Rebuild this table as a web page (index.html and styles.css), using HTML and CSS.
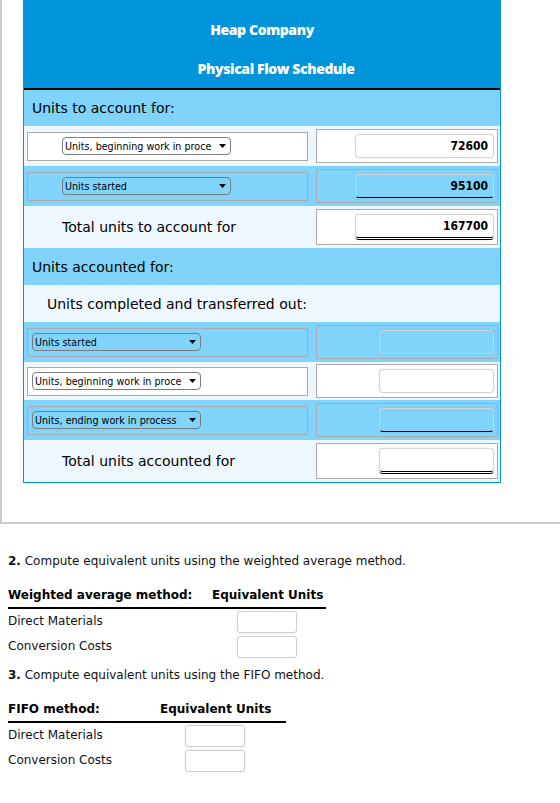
FILE: index.html
```html
<!DOCTYPE html>
<html>
<head>
<meta charset="utf-8">
<link rel="stylesheet" href="styles.css">
</head>
<body>
<div class="frame">
  <div class="sched">
    <div class="sched-head">
      <div class="title">Heap Company</div>
      <div class="title title2">Physical Flow Schedule</div>
    </div>

    <div class="row blue sect">Units to account for:</div>

    <div class="row pale r40">
      <div class="lbox"><div class="sel in"><span>Units, beginning work in proce</span><svg width="7" height="4" viewBox="0 0 7 4"><path d="M0 0h7L3.5 4z"/></svg></div></div>
      <div class="rbox"><input class="num" type="text" value="72600" readonly></div>
    </div>

    <div class="row blue r40">
      <div class="lbox"><div class="sel in"><span>Units started</span><svg width="7" height="4" viewBox="0 0 7 4"><path d="M0 0h7L3.5 4z"/></svg></div></div>
      <div class="rbox"><input class="num u1" type="text" value="95100" readonly></div>
    </div>

    <div class="row pale r42">
      <div class="lab">Total units to account for</div>
      <div class="rbox"><input class="num u2" type="text" value="167700" readonly></div>
    </div>

    <div class="row blue sect sect2">Units accounted for:</div>
    <div class="row pale sub">Units completed and transferred out:</div>

    <div class="row blue r40">
      <div class="lbox"><div class="sel"><span>Units started</span><svg width="7" height="4" viewBox="0 0 7 4"><path d="M0 0h7L3.5 4z"/></svg></div></div>
      <div class="rbox"><input class="num short" type="text" value="" readonly></div>
    </div>

    <div class="row pale r38">
      <div class="lbox"><div class="sel"><span>Units, beginning work in proce</span><svg width="7" height="4" viewBox="0 0 7 4"><path d="M0 0h7L3.5 4z"/></svg></div></div>
      <div class="rbox"><input class="num short" type="text" value="" readonly></div>
    </div>

    <div class="row blue r40">
      <div class="lbox"><div class="sel"><span>Units, ending work in process</span><svg width="7" height="4" viewBox="0 0 7 4"><path d="M0 0h7L3.5 4z"/></svg></div></div>
      <div class="rbox"><input class="num short u1" type="text" value="" readonly></div>
    </div>

    <div class="row pale r42">
      <div class="lab">Total units accounted for</div>
      <div class="rbox"><input class="num short u2" type="text" value="" readonly></div>
    </div>
  </div>
</div>

<div class="q">
  <p class="qline"><b>2.</b> Compute equivalent units using the weighted average method.</p>
  <div class="eq eq-wa">
    <div class="h">Weighted average method:</div>
    <div class="h">Equivalent Units</div>
    <div class="l">Direct Materials</div>
    <div class="v"><input class="box" type="text" readonly></div>
    <div class="l">Conversion Costs</div>
    <div class="v"><input class="box" type="text" readonly></div>
  </div>
  <p class="qline q3"><b>3.</b> Compute equivalent units using the FIFO method.</p>
  <div class="eq eq-fifo">
    <div class="h">FIFO method:</div>
    <div class="h">Equivalent Units</div>
    <div class="l">Direct Materials</div>
    <div class="v"><input class="box" type="text" readonly></div>
    <div class="l">Conversion Costs</div>
    <div class="v"><input class="box" type="text" readonly></div>
  </div>
</div>
</body>
</html>
```

FILE: styles.css
```css
* { box-sizing: border-box; }
body {
  margin: 0;
  background: #fff;
  color: #000;
  font-family: "DejaVu Sans", Verdana, sans-serif;
}
.frame {
  width: 570px;
  border-left: 2px solid #cbcbcb;
  border-bottom: 2px solid #cbcbcb;
  padding: 0 0 39px 21px;
}
.sched {
  width: 478px;
  border: 1px solid #0095da;
  border-top: 0;
}
.sched-head {
  background: #0095da;
  height: 90px;
  padding-top: 10px;
  border-bottom: 2px solid #000;
}
.title {
  height: 39px;
  line-height: 39px;
  text-align: center;
  color: #fff;
  font-family: "Open Sans", sans-serif;
  font-weight: 800;
  font-size: 14px;
  letter-spacing: -0.4px;
}
.title2 { padding-left: 28px; }
.row {
  display: flex;
  align-items: center;
  font-size: 14px;
}
.blue { background: #80d3fa; }
.pale { background: #eff7fe; }
.sect { height: 36px; padding-left: 8px; }
.sect2 { height: 37px; }
.sub { height: 37px; padding-left: 23px; }
.r40 { height: 40px; }
.r38 { height: 38px; }
.r42 { height: 42px; }
.lbox {
  width: 281px;
  height: 29px;
  margin-left: 3px;
  border: 1px solid #aaa;
  display: flex;
  align-items: center;
}
.rbox {
  width: 182px;
  margin-left: 8px;
  border: 1px solid #aaa;
  padding: 4px 3px;
  display: flex;
  justify-content: flex-end;
}
.pale .lbox, .pale .rbox { background: #fff; }
.lab { width: 284px; padding-left: 38px; }
.sel {
  width: 169px;
  height: 18px;
  margin-left: 4px;
  border: 1px solid #7c7c7c;
  border-radius: 4px;
  background: #fff;
  display: flex;
  align-items: center;
  padding: 0 4px 0 2px;
  font-size: 9.6px;
  color: #000;
}
.sel.in { margin-left: 34px; }
.blue .sel { background: transparent; }
.sel span { flex: 1; min-width: 0; white-space: nowrap; }
.sel svg { flex: none; margin-left: 2px; fill: #000; }
.num {
  width: 139px;
  height: 24px;
  border: 1px solid #d4d4d4;
  border-radius: 4px;
  box-shadow: 0 0 2px rgba(0,0,0,0.12);
  background: #fff;
  text-align: right;
  padding: 0 5px;
  font-family: "DejaVu Sans", sans-serif;
  font-stretch: condensed;
  font-weight: bold;
  font-size: 12px;
  color: #000;
  outline: none;
  display: block;
}
.blue .num { background: transparent; }
.num.short { width: 115px; }
.num.u1 { border-bottom: 1px solid #000; }
.num.u2 { border-bottom: 3px double #000; height: 26px; }

.q {
  padding: 30px 0 0 8px;
  font-size: 12px;
  line-height: 15px;
  color: #111;
}
.qline { margin: 0; }
.q3 { margin-top: 9px; }
.eq { display: grid; margin-top: 19px; }
.eq-wa { width: 318px; grid-template-columns: 204px 114px; }
.eq-fifo { width: 278px; grid-template-columns: 152px 126px; }
.eq .h {
  font-weight: bold;
  color: #000;
  padding-bottom: 4px;
  border-bottom: 2px solid #000;
}
.eq .l, .eq .v { height: 25px; display: flex; align-items: center; }
.eq-wa .v { width: 109px; justify-content: center; }
.eq-fifo .v { width: 110px; justify-content: center; }
.box {
  width: 60px;
  height: 22px;
  border: 1px solid #cfcfcf;
  border-radius: 3px;
  box-shadow: 0 0 2px rgba(0,0,0,0.1);
  background: #fff;
  outline: none;
}
```
